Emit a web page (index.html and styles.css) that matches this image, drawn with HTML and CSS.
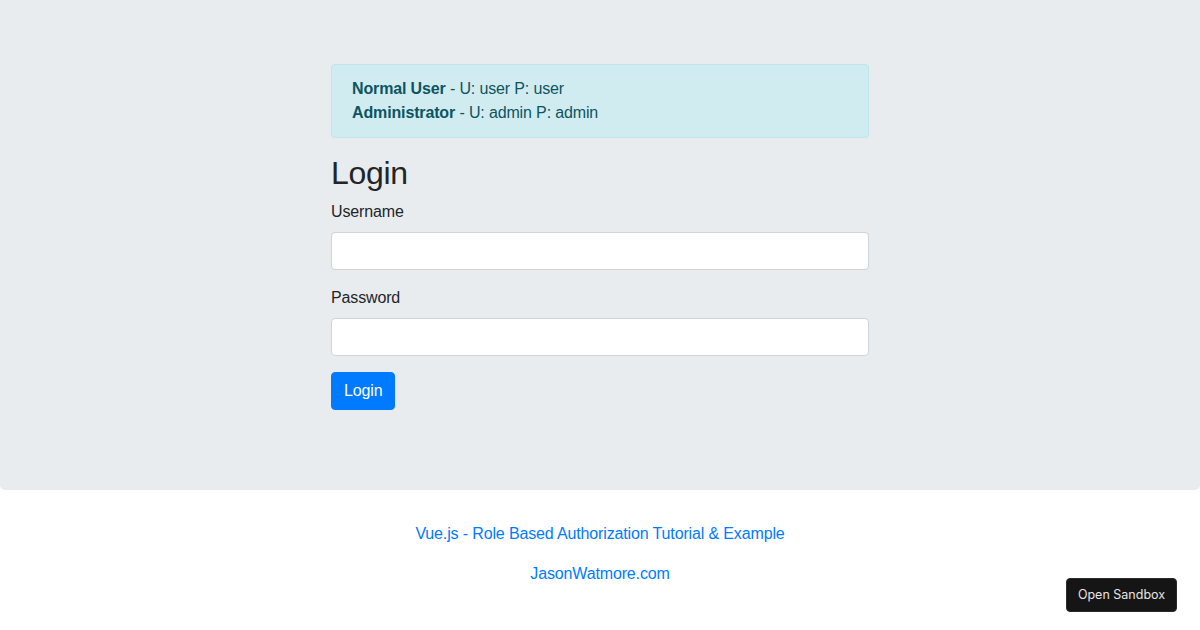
FILE: index.html
```html
<!DOCTYPE html>
<html>
<head>
<meta charset="utf-8">
<link rel="stylesheet" href="styles.css">
</head>
<body>
<div class="jumbotron">
  <div class="col">
    <div class="alert">
      <div><strong>Normal User</strong> - U: user P: user</div>
      <div><strong>Administrator</strong> - U: admin P: admin</div>
    </div>
    <h2 class="title">Login</h2>
    <form class="form">
      <div class="group">
        <label class="label" for="username">Username</label>
        <input class="input" id="username" type="text">
      </div>
      <div class="group">
        <label class="label" for="password">Password</label>
        <input class="input" id="password" type="password">
      </div>
      <div class="group">
        <button class="btn" type="button">Login</button>
      </div>
    </form>
  </div>
</div>
<div class="credits">
  <p><a href="#">Vue.js - Role Based Authorization Tutorial &amp; Example</a></p>
  <p><a href="#">JasonWatmore.com</a></p>
</div>
<a class="sandbox" href="#">Open Sandbox</a>
</body>
</html>
```
FILE: styles.css
```css
* { box-sizing: border-box; }
html, body { margin: 0; padding: 0; }
body {
  font-family: "Liberation Sans", Arial, sans-serif;
  font-size: 16px;
  line-height: 1.5;
  letter-spacing: -0.14px;
  color: #212529;
  background: #fff;
}
.jumbotron {
  background: #e9ecef;
  padding: 64px 0;
  border-radius: 0 0 4.8px 4.8px;
  margin-bottom: 32px;
}
.col {
  width: 538px;
  margin: 0 auto;
}
.alert {
  background: #d1ecf1;
  border: 1px solid #bee5eb;
  color: #0c5460;
  padding: 12px 20px;
  border-radius: 4px;
  margin-bottom: 16px;
}
.alert strong { font-weight: bold; color: #0c5460; }
.title {
  font-size: 32px;
  font-weight: 500;
  line-height: 1.2;
  letter-spacing: -0.3px;
  margin: 0 0 8px;
}
.form { margin: 0; }
.group { margin-bottom: 16px; }
.label {
  display: inline-block;
  margin-bottom: 8px;
}
.input {
  display: block;
  width: 100%;
  height: 38px;
  padding: 6px 12px;
  font-size: 16px;
  font-family: inherit;
  color: #495057;
  background: #fff;
  border: 1px solid #ced4da;
  border-radius: 4px;
}
.btn {
  display: inline-block;
  font-family: inherit;
  font-size: 16px;
  line-height: 1.5;
  letter-spacing: -0.14px;
  color: #fff;
  background: #007bff;
  border: 1px solid #007bff;
  border-radius: 4px;
  padding: 6px 12px;
  cursor: pointer;
}
.credits { text-align: center; }
.credits p { margin: 0 0 16px; }
.credits a { color: #007bff; text-decoration: none; }
.sandbox {
  position: fixed;
  right: 23px;
  bottom: 18px;
  width: 111px;
  height: 34px;
  display: flex;
  align-items: center;
  justify-content: center;
  background: #151515;
  color: #e6e6e6;
  font-family: Inter, "Liberation Sans", sans-serif;
  font-size: 12.5px;
  letter-spacing: 0;
  border: 1px solid #2a2a2a;
  border-radius: 4px;
  text-decoration: none;
}
```
